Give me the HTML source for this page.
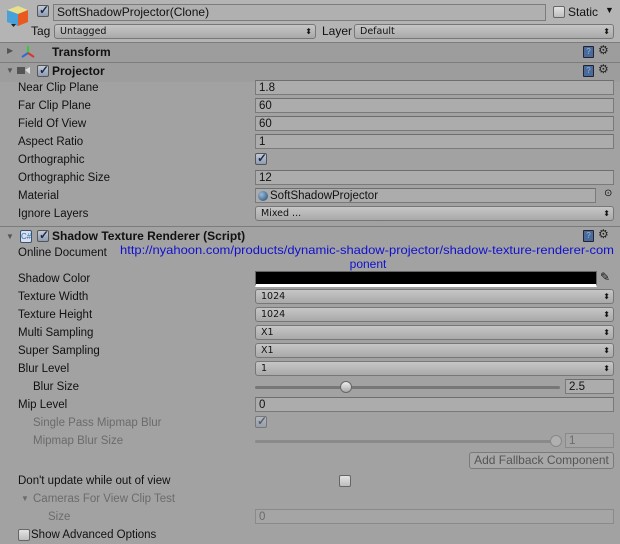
<!DOCTYPE html>
<html><head><meta charset="utf-8"><style>
*{box-sizing:border-box;margin:0;padding:0}
body{width:620px;height:544px;background:#a2a2a2;font-family:"Liberation Sans",sans-serif;font-size:11.5px;color:#111;position:relative;overflow:hidden}
.a{position:absolute;white-space:nowrap}
.l{position:absolute;left:18px;line-height:14px}
.f{position:absolute;left:255px;width:359px;height:15px;background:#acacac;border:1px solid #7a7a7a;border-top-color:#6e6e6e;padding-left:3px;line-height:14px;font-size:11.5px}
.p{position:absolute;left:255px;width:359px;height:15px;border:1px solid #777;border-radius:3px;background:linear-gradient(#c6c6c6,#a9a9a9);padding-left:5px;line-height:14px;font-size:9.5px;font-family:"DejaVu Sans",sans-serif}
.p:after{content:"⬍";position:absolute;right:3px;top:0;font-size:8px}
.hd{position:absolute;left:0;width:620px;height:20px;background:#9d9d9d;border-top:1px solid #7c7c7c}
.cb{position:absolute;width:12px;height:12px;border:1px solid #555;border-radius:2px;background:linear-gradient(#c4cbd6,#8e9bb0)}
.cb.on:after{content:"✓";position:absolute;left:1px;top:-3px;font-size:12px;font-weight:bold;color:#1a2a4a}
.cb.off{background:linear-gradient(#e4e4e4,#bdbdbd);border-color:#666}
.dis{color:#6b6b6b}
.b{font-weight:bold}
.help{position:absolute;width:11px;height:12px;background:#4a6a9a;border:1px solid #223;border-radius:1px;color:#9bd;font-size:8px;text-align:center;line-height:10px}
.gear{position:absolute;font-size:12px;color:#222}
</style></head><body>
<div class="a" style="left:0;top:0;width:620px;height:43px;background:#b4b4b4;border-bottom:1px solid #7c7c7c"></div>
<svg class="a" style="left:5px;top:4px" width="26" height="26" viewBox="0 0 26 26"><polygon points="2,6 13,2 23,6 13,10" fill="#e8e08a"/><polygon points="2,6 13,10 13,22 2,18" fill="#4aa0d8"/><polygon points="13,10 23,6 23,18 13,22" fill="#e85a20"/><polygon points="6,20 11,20 8.5,23" fill="#222"/></svg>
<div class="cb on" style="left:37px;top:5px"></div>
<div class="a" style="left:53px;top:4px;width:493px;height:17px;background:#b0b0b0;border:1px solid #7c7c7c;padding-left:3px;line-height:15px;font-size:12px">SoftShadowProjector(Clone)</div>
<div class="cb off" style="left:553px;top:6px"></div>
<div class="a" style="left:568px;top:5px;font-size:12px">Static</div>
<div class="a" style="left:605px;top:5px;font-size:9px">▼</div>
<div class="a" style="left:31px;top:24px;font-size:12px">Tag</div>
<div class="p" style="left:54px;top:24px;width:262px">Untagged</div>
<div class="a" style="left:322px;top:24px;font-size:12px">Layer</div>
<div class="p" style="left:354px;top:24px;width:260px">Default</div>

<div class="hd" style="top:42px"></div>
<div class="a" style="left:7px;top:46px;font-size:8px;color:#555">▶</div>
<svg class="a" style="left:20px;top:44px" width="16" height="16"><line x1="8" y1="9" x2="8" y2="2" stroke="#3c3" stroke-width="2"/><line x1="8" y1="9" x2="2" y2="13" stroke="#36d" stroke-width="2"/><line x1="8" y1="9" x2="14" y2="13" stroke="#d33" stroke-width="2"/></svg>
<div class="a b" style="left:52px;top:45px;font-size:12px">Transform</div>
<div class="help" style="left:583px;top:46px">?</div><div class="gear" style="left:598px;top:43px">⚙</div>

<div class="hd" style="top:62px"></div>
<div class="a" style="left:6px;top:66px;font-size:8px;color:#555">▼</div>
<svg class="a" style="left:17px;top:66px" width="14" height="10"><rect x="0" y="1" width="8" height="7" fill="#555"/><polygon points="8,4 13,1 13,8" fill="#ddd"/></svg>
<div class="cb on" style="left:37px;top:65px"></div>
<div class="a b" style="left:52px;top:64px;font-size:12px">Projector</div>
<div class="help" style="left:583px;top:65px">?</div><div class="gear" style="left:598px;top:62px">⚙</div>

<div class="l" style="top:81px">Near Clip Plane</div><div class="f" style="top:80px">1.8</div>
<div class="l" style="top:99px">Far Clip Plane</div><div class="f" style="top:98px">60</div>
<div class="l" style="top:117px">Field Of View</div><div class="f" style="top:116px">60</div>
<div class="l" style="top:135px">Aspect Ratio</div><div class="f" style="top:134px">1</div>
<div class="l" style="top:153px">Orthographic</div><div class="cb on" style="left:255px;top:153px"></div>
<div class="l" style="top:171px">Orthographic Size</div><div class="f" style="top:170px">12</div>
<div class="l" style="top:189px">Material</div><div class="f" style="top:188px;width:341px;padding-left:14px">SoftShadowProjector</div>
<div class="a" style="left:258px;top:191px;width:10px;height:10px;border-radius:50%;background:radial-gradient(circle at 35% 35%,#9bd,#246)"></div>
<div class="a" style="left:604px;top:188px;font-size:10px">⊙</div>
<div class="l" style="top:207px">Ignore Layers</div><div class="p" style="top:206px">Mixed ...</div>

<div class="a" style="left:0;top:226px;width:620px;border-top:1px solid #7c7c7c"></div>
<div class="a" style="left:6px;top:232px;font-size:8px;color:#555">▼</div>
<div class="a" style="left:20px;top:230px;width:12px;height:13px;border:1px solid #357;background:#dde;border-radius:2px;font-size:8px;color:#27a;line-height:11px;text-align:center">C#</div>
<div class="cb on" style="left:37px;top:230px"></div>
<div class="a b" style="left:52px;top:229px;font-size:12px">Shadow Texture Renderer (Script)</div>
<div class="help" style="left:583px;top:230px">?</div><div class="gear" style="left:598px;top:227px">⚙</div>
<div class="l" style="top:246px">Online Document</div>
<svg class="a" style="left:118px;top:242px" width="500" height="30"><text x="2" y="12" font-family="Liberation Sans" font-size="12" fill="#1010d0" textLength="494" lengthAdjust="spacingAndGlyphs">http://nyahoon.com/products/dynamic-shadow-projector/shadow-texture-renderer-com</text><text x="250" y="26" text-anchor="middle" font-family="Liberation Sans" font-size="12" fill="#1010d0">ponent</text></svg>
<div class="l" style="top:272px">Shadow Color</div>
<div class="a" style="left:255px;top:271px;width:342px;height:16px;background:#000;border:1px solid #666;border-bottom:3px solid #fff"></div>
<div class="a" style="left:600px;top:270px;font-size:12px">✎</div>
<div class="l" style="top:290px">Texture Width</div><div class="p" style="top:289px">1024</div>
<div class="l" style="top:308px">Texture Height</div><div class="p" style="top:307px">1024</div>
<div class="l" style="top:326px">Multi Sampling</div><div class="p" style="top:325px">X1</div>
<div class="l" style="top:344px">Super Sampling</div><div class="p" style="top:343px">X1</div>
<div class="l" style="top:362px">Blur Level</div><div class="p" style="top:361px">1</div>
<div class="l" style="top:380px;left:33px">Blur Size</div>
<div class="a" style="left:255px;top:386px;width:305px;height:3px;background:#777;border-radius:2px"></div>
<div class="a" style="left:340px;top:381px;width:12px;height:12px;border-radius:50%;background:linear-gradient(#eee,#aaa);border:1px solid #666"></div>
<div class="f" style="left:565px;top:379px;width:49px">2.5</div>
<div class="l" style="top:398px">Mip Level</div><div class="f" style="top:397px">0</div>
<div class="l dis" style="top:416px;left:33px">Single Pass Mipmap Blur</div><div class="cb on" style="left:255px;top:416px;opacity:.55"></div>
<div class="l dis" style="top:434px;left:33px">Mipmap Blur Size</div>
<div class="a" style="left:255px;top:440px;width:305px;height:3px;background:#8a8a8a;border-radius:2px"></div>
<div class="a" style="left:550px;top:435px;width:12px;height:12px;border-radius:50%;background:#b0b0b0;border:1px solid #888"></div>
<div class="f dis" style="left:565px;top:433px;width:49px;background:#a5a5a5;border-color:#8a8a8a">1</div>
<div class="a" style="left:469px;top:452px;width:145px;height:17px;border:1px solid #7a7a7a;border-radius:3px;background:#a8a8a8;color:#555;text-align:center;line-height:15px;font-size:12px">Add Fallback Component</div>
<div class="l" style="top:474px">Don't update while out of view</div>
<div class="cb off" style="left:339px;top:475px"></div>
<div class="a dis" style="left:21px;top:494px;font-size:8px">▼</div>
<div class="l dis" style="top:492px;left:33px">Cameras For View Clip Test</div>
<div class="l dis" style="top:510px;left:48px">Size</div><div class="f dis" style="top:509px;background:#a5a5a5;border-color:#8a8a8a">0</div>
<div class="cb off" style="left:18px;top:529px"></div>
<div class="l" style="top:528px;left:31px">Show Advanced Options</div>
</body></html>
